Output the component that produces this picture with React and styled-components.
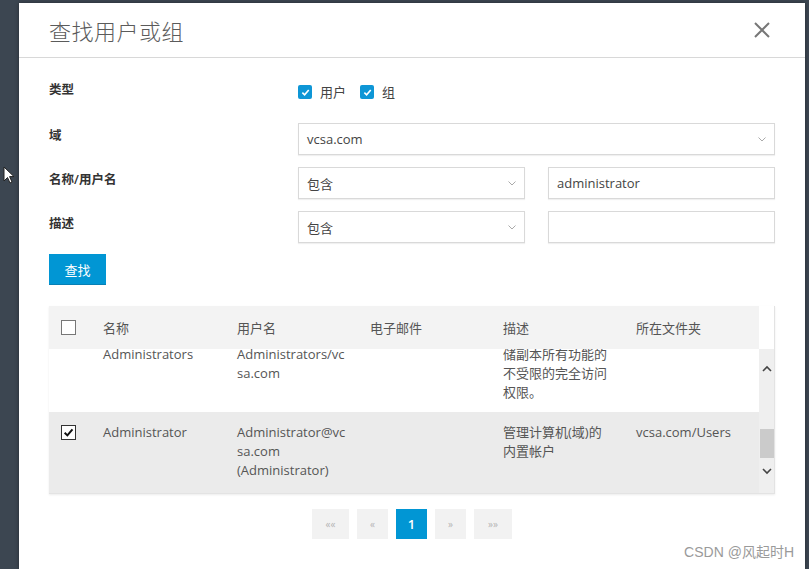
import React, { useLayoutEffect, useRef } from "react";
import styled, { createGlobalStyle } from "styled-components";

const GlobalStyle = createGlobalStyle`
  html, body {
    margin: 0;
    padding: 0;
    background: #3c4651;
  }
  body {
    font-family: "Open Sans", "Noto Sans CJK SC", sans-serif;
    color: #565656;
  }
`;

const FONT = `"Open Sans", "Noto Sans CJK SC", sans-serif`;

const Screen = styled.div`
  position: relative;
  display: flex;
  height: 569px;
  padding: 3px 4px 0 19px;
  box-sizing: border-box;
  overflow: hidden;
`;

const Cursor = styled.svg`
  position: absolute;
  left: 3px;
  top: 166px;
`;

const Dialog = styled.div`
  flex: 1;
  min-width: 0;
  display: flex;
  flex-direction: column;
  background: #fff;
  box-shadow: 0 0 4px rgba(0, 0, 0, 0.4);
  position: relative;
`;

const Header = styled.div`
  height: 54px;
  display: flex;
  align-items: center;
  justify-content: space-between;
  padding: 0 30px 0 30px;
  border-bottom: 1px solid #d8d8d8;
`;

const Title = styled.h1`
  margin: 0;
  font-family: ${FONT};
  font-size: 22px;
  font-weight: 300;
  color: #5b5b5b;
  letter-spacing: 0.5px;
`;

const CloseButton = styled.button`
  border: 0;
  background: none;
  padding: 0;
  width: 26px;
  height: 26px;
  display: flex;
  align-items: center;
  justify-content: center;
  cursor: pointer;
`;

const Body = styled.div`
  padding: 18px 30px 0 30px;
  display: flex;
  flex-direction: column;
`;

const Form = styled.div`
  display: grid;
  grid-template-columns: 226px 1fr 1fr;
  column-gap: 23px;
  row-gap: 12px;
  grid-template-rows: 35px 32px 32px 32px;
`;

const Label = styled.div`
  font-size: 12.5px;
  font-weight: 600;
  color: #333;
  padding-top: ${(p) => p.$top || 4}px;
  line-height: 18px;
`;

const CheckGroup = styled.div`
  grid-column: span 2;
  display: flex;
  align-items: flex-start;
  padding-top: 7px;
  gap: 14px;
`;

const CheckItem = styled.label`
  display: flex;
  align-items: center;
  gap: 8px;
  font-size: 13px;
  color: #444;
  line-height: 18px;
`;

const BlueBox = styled.span`
  width: 14px;
  height: 14px;
  border-radius: 2px;
  background: #0e96d6;
  display: flex;
  align-items: center;
  justify-content: center;
`;

const Select = styled.div`
  grid-column: ${(p) => (p.$wide ? "span 2" : "auto")};
  display: flex;
  align-items: center;
  justify-content: space-between;
  border: 1px solid #d9d9d9;
  box-shadow: 0 1px 1px rgba(0, 0, 0, 0.06);
  padding: 0 8px 0 8px;
  font-size: 13px;
  color: #444;
  background: #fff;
`;

const Input = styled.div`
  display: flex;
  align-items: center;
  border: 1px solid #d9d9d9;
  box-shadow: 0 1px 1px rgba(0, 0, 0, 0.06);
  padding: 0 8px;
  height: 30px;
  font-size: 13px;
  color: #444;
`;

const SearchButton = styled.button`
  margin-top: 11px;
  align-self: flex-start;
  width: 57px;
  height: 31px;
  background: #0196d4;
  border: 0;
  border-bottom: 1px solid #0780b5;
  color: #fff;
  font-family: ${FONT};
  font-size: 13px;
`;

const Table = styled.div`
  margin-top: 21px;
  height: 187px;
  border-right: 1px solid #e3e3e3;
  border-bottom: 1px solid #e3e3e3;
  box-shadow: 0 1px 2px rgba(0, 0, 0, 0.08);
  display: flex;
  flex-direction: column;
`;

const COLS = "54px 134px 133px 133px 133px 1fr";

const HeadRow = styled.div`
  display: flex;
  height: 43px;
`;

const HeadCells = styled.div`
  flex: 1;
  display: grid;
  grid-template-columns: ${COLS};
  align-items: center;
  background: #f3f3f3;
  font-size: 13px;
  color: #555;
`;

const ScrollGap = styled.div`
  width: 15px;
  background: #fff;
`;

const BodyWrap = styled.div`
  flex: 1;
  display: flex;
  min-height: 0;
`;

const Rows = styled.div`
  flex: 1;
  overflow: hidden;
`;

const Row = styled.div`
  display: grid;
  grid-template-columns: ${COLS};
  background: ${(p) => (p.$selected ? "#ebebeb" : "#fff")};
  padding: ${(p) => (p.$first ? "0 0 10px" : "11px 0 14px")};
  font-size: 13px;
  line-height: 19px;
  color: #555;
`;

const Cell = styled.div`
  white-space: pre-line;
`;

const CheckCell = styled.div`
  padding-left: 12px;
  display: flex;
  align-items: ${(p) => (p.$center ? "center" : "flex-start")};
  padding-top: ${(p) => (p.$center ? 0 : 2)}px;
`;

const PlainBox = styled.span`
  width: 13px;
  height: 13px;
  border: 1px solid ${(p) => (p.$dark ? "#333" : "#777")};
  background: #fff;
  display: flex;
  align-items: center;
  justify-content: center;
`;

const Scrollbar = styled.div`
  width: 15px;
  background: #efefef;
  display: flex;
  flex-direction: column;
  align-items: center;
  padding-top: 16px;
`;

const Thumb = styled.div`
  width: 14px;
  height: 29px;
  background: #cbcbcb;
  margin-top: 57px;
`;

const ArrowIcon = styled.svg`
  display: block;
  margin-top: ${(p) => p.$mt || 0}px;
`;

const Pager = styled.div`
  display: flex;
  justify-content: center;
  gap: 8px;
  margin-top: 15px;
`;

const PageButton = styled.div`
  height: 30px;
  min-width: ${(p) => p.$w}px;
  display: flex;
  align-items: center;
  justify-content: center;
  background: ${(p) => (p.$active ? "#0196d4" : "#f2f2f2")};
  color: ${(p) => (p.$active ? "#fff" : "#b5b5b5")};
  font-size: ${(p) => (p.$active ? 13 : 10)}px;
  font-weight: ${(p) => (p.$active ? 600 : 400)};
`;

const Watermark = styled.div`
  position: absolute;
  right: 11px;
  bottom: 8px;
  font-family: "Liberation Sans", "Noto Sans CJK SC", sans-serif;
  font-size: 14px;
  color: #9a9a9a;
`;

const Tick = ({ color = "#fff", size = 9 }) => (
  <svg width={size} height={size} viewBox="0 0 10 10">
    <path d="M1.5 5.2 L4 7.6 L8.6 2.2" fill="none" stroke={color} strokeWidth="1.8" />
  </svg>
);

const Chevron = () => (
  <svg width="8" height="5" viewBox="0 0 8 5">
    <path d="M0.5 0.5 L4 4 L7.5 0.5" fill="none" stroke="#aaa" strokeWidth="1" />
  </svg>
);

const rows = [
  {
    name: "Administrators",
    user: "Administrators/vc\nsa.com",
    email: "",
    desc: "储副本所有功能的\n不受限的完全访问\n权限。",
    folder: "",
  },
  {
    name: "Administrator",
    user: "Administrator@vc\nsa.com\n(Administrator)",
    email: "",
    desc: "管理计算机(域)的\n内置帐户",
    folder: "vcsa.com/Users",
    selected: true,
  },
];

const pages = [
  { label: "««", w: 37 },
  { label: "«", w: 31 },
  { label: "1", w: 31, active: true },
  { label: "»", w: 31 },
  { label: "»»", w: 38 },
];

export default function App() {
  const rowsRef = useRef(null);

  useLayoutEffect(() => {
    if (rowsRef.current) rowsRef.current.scrollTop = 4;
  }, []);

  return (
    <>
      <GlobalStyle />
      <Screen>
        <Cursor width="12" height="19" viewBox="0 0 12 19">
          <path d="M1 1 L1 15 L4.5 11.5 L7 17 L9 16 L6.6 10.6 L11 10.6 Z" fill="#fff" stroke="#222" strokeWidth="1" />
        </Cursor>
        <Dialog>
          <Header>
            <Title>查找用户或组</Title>
            <CloseButton aria-label="close">
              <svg width="18" height="18" viewBox="0 0 18 18">
                <path d="M2 2 L16 16 M16 2 L2 16" stroke="#777" strokeWidth="2" />
              </svg>
            </CloseButton>
          </Header>
          <Body>
            <Form>
              <Label $top={5}>类型</Label>
              <CheckGroup>
                <CheckItem>
                  <BlueBox>
                    <Tick />
                  </BlueBox>
                  用户
                </CheckItem>
                <CheckItem>
                  <BlueBox>
                    <Tick />
                  </BlueBox>
                  组
                </CheckItem>
              </CheckGroup>

              <Label>域</Label>
              <Select $wide>
                vcsa.com
                <Chevron />
              </Select>

              <Label>名称/用户名</Label>
              <Select>
                包含
                <Chevron />
              </Select>
              <Input>administrator</Input>

              <Label>描述</Label>
              <Select>
                包含
                <Chevron />
              </Select>
              <Input />
            </Form>

            <SearchButton>查找</SearchButton>

            <Table>
              <HeadRow>
                <HeadCells>
                  <CheckCell $center>
                    <PlainBox />
                  </CheckCell>
                  <div>名称</div>
                  <div>用户名</div>
                  <div>电子邮件</div>
                  <div>描述</div>
                  <div>所在文件夹</div>
                </HeadCells>
                <ScrollGap />
              </HeadRow>
              <BodyWrap>
                <Rows ref={rowsRef}>
                  {rows.map((r, i) => (
                    <Row key={r.name} $selected={r.selected} $first={i === 0}>
                      <CheckCell>
                        {r.selected && (
                          <PlainBox $dark>
                            <Tick color="#111" size={11} />
                          </PlainBox>
                        )}
                      </CheckCell>
                      <Cell>{r.name}</Cell>
                      <Cell>{r.user}</Cell>
                      <Cell>{r.email}</Cell>
                      <Cell>{r.desc}</Cell>
                      <Cell>{r.folder}</Cell>
                    </Row>
                  ))}
                </Rows>
                <Scrollbar>
                  <ArrowIcon width="10" height="7" viewBox="0 0 10 7">
                    <path d="M1 6 L5 2 L9 6" fill="none" stroke="#444" strokeWidth="1.6" />
                  </ArrowIcon>
                  <Thumb />
                  <ArrowIcon $mt={10} width="10" height="7" viewBox="0 0 10 7">
                    <path d="M1 1 L5 5 L9 1" fill="none" stroke="#444" strokeWidth="1.6" />
                  </ArrowIcon>
                </Scrollbar>
              </BodyWrap>
            </Table>

            <Pager>
              {pages.map((p) => (
                <PageButton key={p.label} $w={p.w} $active={p.active}>
                  {p.label}
                </PageButton>
              ))}
            </Pager>
          </Body>
          <Watermark>CSDN @风起时H</Watermark>
        </Dialog>
      </Screen>
    </>
  );
}
